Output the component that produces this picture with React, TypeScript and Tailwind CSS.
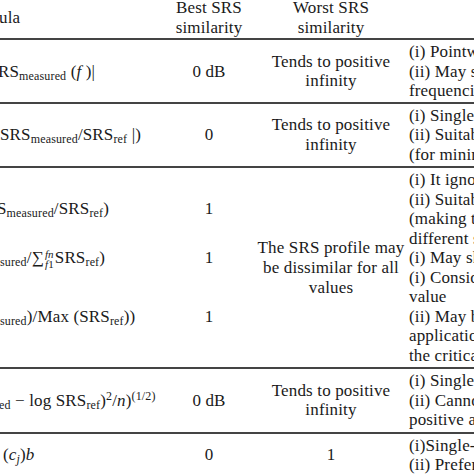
import React from "react";

function Sub({ children }: { children: React.ReactNode }) {
  return <sub className="text-[12px]">{children}</sub>;
}

function Sup({ children }: { children: React.ReactNode }) {
  return <sup className="text-[12px]">{children}</sup>;
}

function Notes({ lines }: { lines: string[] }) {
  return (
    <>
      {lines.map((l, i) => (
        <div key={i} className="whitespace-nowrap">
          {l}
        </div>
      ))}
    </>
  );
}

const line = "border-b-2 border-[#444]";

export default function App() {
  return (
    <div className="w-[474px] h-[474px] overflow-hidden bg-white text-[#1a1a1a] font-['Liberation_Serif','Times_New_Roman',serif] text-[17px] tracking-[0.15px] leading-[19.5px]">
      <table className="table-fixed border-collapse w-[626px] -mt-[2px]">
        <colgroup>
          <col className="w-[162px]" />
          <col className="w-[94px]" />
          <col className="w-[150px]" />
          <col className="w-[220px]" />
        </colgroup>
        <thead>
          <tr>
            <th className={`${line} font-normal text-left align-middle pb-[1px]`}>
              <span className="-ml-[1px]">ula</span>
            </th>
            <th className={`${line} font-normal text-center pb-[1px]`}>
              Best SRS
              <br />
              similarity
            </th>
            <th className={`${line} font-normal text-center pb-[1px]`}>
              Worst SRS
              <br />
              similarity
            </th>
            <th className={`${line} font-normal pb-[1px]`}></th>
          </tr>
        </thead>
        <tbody>
          <tr>
            <td className={`${line} pt-[2px] pb-[1px] align-middle whitespace-nowrap`}>
              <span className="-ml-[2px]">
                RS<Sub>measured</Sub> (<i>f</i> )|
              </span>
            </td>
            <td className={`${line} pt-[2px] pb-[1px] text-center align-middle`}>0 dB</td>
            <td className={`${line} pt-[2px] pb-[1px] text-center align-middle`}>
              Tends to positive
              <br />
              infinity
            </td>
            <td className={`${line} pt-[2px] pb-[1px] px-[3px] align-top`}>
              <Notes
                lines={[
                  "(i) Pointwise comparison of the spectra",
                  "(ii) May show large errors at some",
                  "frequencies",
                ]}
              />
            </td>
          </tr>
          <tr>
            <td className={`${line} py-[2px] align-middle whitespace-nowrap`}>
              SRS<Sub>measured</Sub>/SRS<Sub>ref</Sub> |)
            </td>
            <td className={`${line} py-[2px] text-center align-middle`}>0</td>
            <td className={`${line} py-[2px] text-center align-middle`}>
              Tends to positive
              <br />
              infinity
            </td>
            <td className={`${line} py-[2px] px-[3px] align-top`}>
              <Notes
                lines={[
                  "(i) Single-value comparison",
                  "(ii) Suitable for optimization",
                  "(for minimization problems)",
                ]}
              />
            </td>
          </tr>
          <tr>
            <td className="pt-[2px] align-middle whitespace-nowrap">
              <span className="-ml-[3px]">
                S<Sub>measured</Sub>/SRS<Sub>ref</Sub>)
              </span>
            </td>
            <td className="pt-[2px] text-center align-middle">1</td>
            <td rowSpan={3} className={`${line} text-center align-middle leading-[20px]`}>
              The SRS profile may
              <br />
              be dissimilar for all
              <br />
              values
            </td>
            <td className="pt-[2px] px-[3px] align-top">
              <Notes
                lines={[
                  "(i) It ignores the shape of the curve",
                  "(ii) Suitable for comparing levels",
                  "(making the comparison of",
                  "different shock profiles easier)",
                ]}
              />
            </td>
          </tr>
          <tr>
            <td className="align-middle whitespace-nowrap">
              <Sub>sured</Sub>/<span>∑</span>
              <span className="inline-flex flex-col align-middle text-[11px] leading-[10px] italic -my-[6px] ml-[1px] mr-[1px]">
                <span>fn</span>
                <span>
                  f<span className="not-italic">1</span>
                </span>
              </span>
              SRS<Sub>ref</Sub>)
            </td>
            <td className="text-center align-middle">1</td>
            <td className="px-[3px] align-top">
              <Notes lines={["(i) May shift the spectral content"]} />
            </td>
          </tr>
          <tr>
            <td className={`${line} pb-[2px] align-middle whitespace-nowrap`}>
              <Sub>sured</Sub>)/Max (SRS<Sub>ref</Sub>))
            </td>
            <td className={`${line} pb-[2px] text-center align-middle`}>1</td>
            <td className={`${line} pb-[2px] px-[3px] align-top`}>
              <Notes
                lines={[
                  "(i) Considers only the maximum",
                  "value",
                  "(ii) May be suitable for",
                  "applications where the peak is",
                  "the critical parameter",
                ]}
              />
            </td>
          </tr>
          <tr>
            <td className={`${line} py-[2px] align-middle whitespace-nowrap`}>
              <span className="-ml-[1px]">
                <Sub>ed</Sub> − log SRS<Sub>ref</Sub>)<Sup>2</Sup>/<i>n</i>)<Sup>(1/2)</Sup>
              </span>
            </td>
            <td className={`${line} py-[2px] text-center align-middle`}>0 dB</td>
            <td className={`${line} py-[2px] text-center align-middle`}>
              Tends to positive
              <br />
              infinity
            </td>
            <td className={`${line} py-[2px] px-[3px] align-top`}>
              <Notes
                lines={[
                  "(i) Single-value comparison",
                  "(ii) Cannot distinguish between",
                  "positive and negative errors",
                ]}
              />
            </td>
          </tr>
          <tr>
            <td className="py-[2px] align-middle whitespace-nowrap">
              <span className="ml-[3px]">
                (<i>c</i>
                <Sub>
                  <i>j</i>
                </Sub>
                )<i>b</i>
              </span>
            </td>
            <td className="py-[2px] text-center align-middle">0</td>
            <td className="py-[2px] text-center align-middle">1</td>
            <td className="py-[2px] px-[3px] align-top">
              <Notes
                lines={["(i)Single-value comparison", "(ii) Preferred for optimization"]}
              />
            </td>
          </tr>
        </tbody>
      </table>
    </div>
  );
}
